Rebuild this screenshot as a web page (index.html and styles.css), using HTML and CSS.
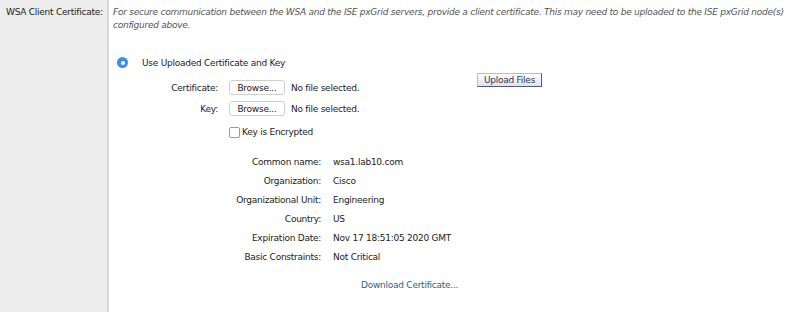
FILE: index.html
```html
<!DOCTYPE html>
<html>
<head>
<meta charset="utf-8">
<link rel="stylesheet" href="styles.css">
</head>
<body>
<div class="row">
  <div class="label-col">WSA Client Certificate:</div>
  <div class="content">
    <p class="desc">For secure communication between the WSA and the ISE pxGrid servers, provide a client certificate. This may need to be uploaded to the ISE pxGrid node(s) configured above.</p>
    <div class="option">
      <span class="radio"></span>
      <span class="option-text">Use Uploaded Certificate and Key</span>
    </div>
    <div class="upload-area">
      <div class="fields">
        <div class="field-row">
          <span class="flabel">Certificate:</span>
          <span class="browse">Browse...</span>
          <span class="nofile">No file selected.</span>
        </div>
        <div class="field-row">
          <span class="flabel">Key:</span>
          <span class="browse">Browse...</span>
          <span class="nofile">No file selected.</span>
        </div>
        <div class="field-row check-row">
          <span class="flabel"></span>
          <span class="checkbox"></span>
          <span class="check-text">Key is Encrypted</span>
        </div>
      </div>
      <span class="upload-btn">Upload Files</span>
    </div>
    <div class="info">
      <span class="ilabel">Common name:</span><span class="ival">wsa1.lab10.com</span>
      <span class="ilabel">Organization:</span><span class="ival">Cisco</span>
      <span class="ilabel">Organizational Unit:</span><span class="ival">Engineering</span>
      <span class="ilabel">Country:</span><span class="ival">US</span>
      <span class="ilabel">Expiration Date:</span><span class="ival">Nov 17 18:51:05 2020 GMT</span>
      <span class="ilabel">Basic Constraints:</span><span class="ival">Not Critical</span>
    </div>
    <div class="download"><a class="download-link">Download Certificate...</a></div>
  </div>
</div>
</body>
</html>
```
FILE: styles.css
```css
html, body {
  margin: 0;
  padding: 0;
  background: #ffffff;
}
body {
  font-family: "DejaVu Sans", Verdana, sans-serif;
  font-size: 9px;
  letter-spacing: -0.25px;
  color: #222222;
}
.row {
  display: flex;
  height: 312px;
}
.label-col {
  width: 101px;
  flex: none;
  background: #ededed;
  border-right: 2px solid #d7d7d7;
  padding: 6px 0 0 6px;
  line-height: 13px;
  white-space: nowrap;
  color: #222;
}
.content {
  flex: 1;
  padding: 6px 4px 0 4px;
}
.desc {
  margin: 0;
  font-style: italic;
  color: #555555;
  line-height: 13px;
}
.option {
  display: flex;
  align-items: center;
  margin-top: 24px;
  height: 13px;
}
.radio {
  width: 11px;
  height: 11px;
  box-sizing: border-box;
  border-radius: 50%;
  background: #3b8df0;
  margin-left: 4px;
  display: flex;
  align-items: center;
  justify-content: center;
}
.radio::after {
  content: "";
  width: 4px;
  height: 4px;
  border-radius: 50%;
  background: #fff;
}
.option-text {
  margin-left: 14px;
  color: #1a1a33;
}
.upload-area {
  display: flex;
  align-items: flex-start;
  margin-top: 4px;
}
.fields {
  width: 364px;
  padding-top: 4px;
}
.field-row {
  display: flex;
  align-items: center;
  height: 21px;
}
.check-row {
  height: 22px;
  padding-top: 2px;
}
.flabel {
  width: 105px;
  text-align: right;
  flex: none;
}
.browse {
  margin-left: 11px;
  width: 56px;
  height: 15px;
  box-sizing: border-box;
  border: 1px solid #cfcfcf;
  border-radius: 3px;
  background: #fff;
  display: flex;
  align-items: center;
  justify-content: center;
  color: #222;
}
.nofile {
  margin-left: 6px;
}
.checkbox {
  margin-left: 11px;
  width: 11px;
  height: 11px;
  box-sizing: border-box;
  border: 1px solid #9a9a9a;
  border-radius: 2px;
  background: #fff;
}
.check-text {
  margin-left: 2px;
}
.upload-btn {
  width: 65px;
  height: 14px;
  box-sizing: border-box;
  border: 1px solid #b9bccb;
  border-right-color: #545a7a;
  border-bottom-color: #545a7a;
  background: linear-gradient(#ffffff, #dfe1ef);
  display: flex;
  align-items: center;
  justify-content: center;
  color: #333344;
}
.info {
  display: grid;
  grid-template-columns: 208px auto;
  column-gap: 12px;
  grid-auto-rows: 19px;
  align-items: center;
  margin-top: 9px;
  justify-content: start;
}
.ilabel {
  text-align: right;
}
.download {
  margin-top: 10px;
  padding-left: 248px;
  line-height: 19px;
}
.download-link {
  color: #2a6383;
  text-decoration: none;
}
```
